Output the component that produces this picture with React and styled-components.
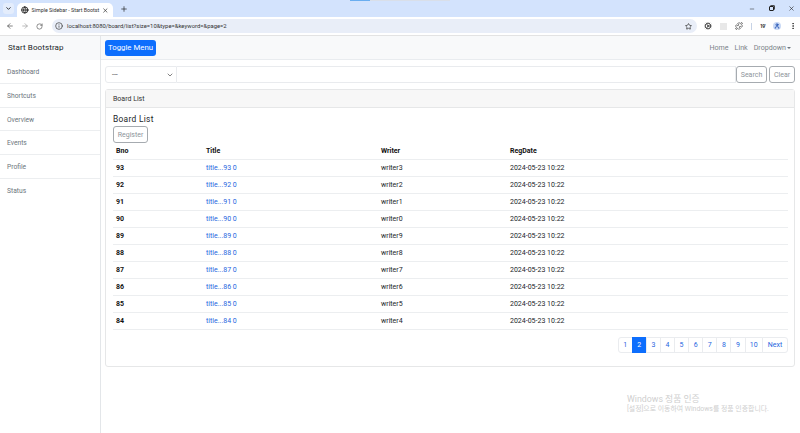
import React from "react";
import styled, { createGlobalStyle } from "styled-components";
import { ArrowLeft, ArrowRight, RotateCw, ChevronDown, Star, Plus, X, Minus, EllipsisVertical, Puzzle, Globe, User, Info, Cog } from "lucide-react";

const Global = createGlobalStyle`
  html, body { margin: 0; padding: 0; background: #fff; }
  body { font-family: Roboto, "Noto Sans CJK KR", sans-serif; font-size: 7px; color: #212529; }
  * { box-sizing: border-box; }
`;

const Page = styled.div`
  position: relative;
  width: 800px;
  height: 433px;
  overflow: hidden;
  display: flex;
  flex-direction: column;
`;

const CaptureMark = styled.div`
  position: absolute;
  left: ${(p) => p.$left}px;
  top: 0;
  width: ${(p) => p.$width}px;
  height: 1px;
  background: ${(p) => p.$color};
`;

const TabStrip = styled.div`
  height: 17px;
  background: #d3e3fd;
  display: flex;
  align-items: flex-end;
  padding-left: 3px;
  flex: none;
`;
const TabSearch = styled.div`
  width: 11px;
  height: 11px;
  margin-bottom: 3px;
  border-radius: 3px;
  background: #e4edfc;
  display: flex;
  align-items: center;
  justify-content: center;
  color: #1f1f1f;
`;
const Tab = styled.div`
  width: 96px;
  height: 14px;
  margin-left: 3px;
  background: #fff;
  border-radius: 5px 5px 0 0;
  display: flex;
  align-items: center;
  padding: 0 4px;
  gap: 3px;
  color: #333;
  font-size: 5.3px;
  white-space: nowrap;
`;
const TabTitle = styled.span`
  flex: 1;
`;
const NewTab = styled.div`
  margin: 0 0 3px 7px;
  height: 11px;
  display: flex;
  align-items: center;
  color: #1f1f1f;
`;
const WindowButtons = styled.div`
  margin-left: auto;
  height: 17px;
  display: flex;
  align-items: center;
  gap: 13px;
  padding-right: 5px;
  color: #1f1f1f;
`;
const Restore = styled.div`
  width: 5px;
  height: 5px;
  border: 1px solid #1f1f1f;
  border-radius: 1px;
  box-shadow: 1px -1px 0 -0.2px #1f1f1f;
  margin: 0 1px;
`;

const ToolBar = styled.div`
  height: 19px;
  flex: none;
  display: flex;
  align-items: center;
  padding-left: 6px;
  gap: 7px;
  color: #444;
  border-bottom: 1px solid #e3e3e3;
`;
const Address = styled.div`
  flex: 1;
  height: 14px;
  margin-left: 2px;
  background: #e9eef8;
  border-radius: 7px;
  display: flex;
  align-items: center;
  padding: 0 5px 0 3px;
  gap: 4px;
  color: #333;
  font-size: 5.9px;
`;
const Url = styled.span`
  flex: 1;
`;
const ToolIcons = styled.div`
  display: flex;
  align-items: center;
  gap: 8px;
  padding-right: 3px;
  color: #333;
`;
const Blank = styled.div`
  width: 7px;
  height: 7px;
  background: #e8e8e8;
`;
const Divider = styled.div`
  width: 1px;
  height: 7px;
  background: #c7d3e6;
`;
const Avatar = styled.div`
  width: 8px;
  height: 8px;
  border-radius: 50%;
  background: #c9d9f5;
  color: #0b3fa8;
  display: flex;
  align-items: center;
  justify-content: center;
`;
const Badge = styled.span`
  font-size: 5px;
  font-weight: 700;
  letter-spacing: -0.5px;
  color: #333;
`;

const Content = styled.div`
  flex: 1;
  display: flex;
  min-height: 0;
`;
const Sidebar = styled.aside`
  width: 101px;
  flex: none;
  border-right: 1px solid #e3e6e9;
`;
const SideHead = styled.div`
  height: 24px;
  background: #f8f9fa;
  font-size: 8px;
  line-height: 24px;
  padding-left: 8px;
  letter-spacing: 0.1px;
  color: #212529;
`;
const SideItem = styled.div`
  height: 23.8px;
  line-height: 24.5px;
  padding-left: 7px;
  font-size: 6.7px;
  color: #6c757d;
  border-bottom: 1px solid #eceef0;
  &:last-child { border-bottom: none; }
`;

const Main = styled.main`
  flex: 1;
  min-width: 0;
`;
const Navbar = styled.nav`
  height: 24px;
  background: #f8f9fa;
  border-bottom: 1px solid #e9ecef;
  display: flex;
  align-items: center;
  padding: 0 9px 0 4px;
`;
const Primary = styled.div`
  background: #0d6efd;
  color: #fff;
  border-radius: 3px;
  height: 16px;
  width: 51px;
  font-size: 7.8px;
  display: flex;
  align-items: center;
  justify-content: center;
`;
const NavLinks = styled.div`
  margin-left: auto;
  display: flex;
  gap: 6px;
  font-size: 7.1px;
  color: #7d848a;
  align-items: center;
`;
const Caret = styled.span`
  display: inline-block;
  margin-left: 1px;
  vertical-align: 1px;
  border-top: 2px solid #6c757d;
  border-left: 2px solid transparent;
  border-right: 2px solid transparent;
`;

const Body = styled.div`
  padding: 6px 5px 0 4px;
`;
const SearchRow = styled.div`
  display: flex;
  height: 17px;
`;
const Select = styled.div`
  width: 72px;
  border: 1px solid #e9ebee;
  border-radius: 3px 0 0 3px;
  display: flex;
  align-items: center;
  justify-content: space-between;
  padding: 0 2px 0 6px;
  font-size: 7px;
  color: #444;
`;
const Input = styled.div`
  flex: 1;
  border: 1px solid #e9ebee;
  border-left: none;
`;
const Outline = styled.div`
  border: 1px solid #a6abb0;
  border-radius: 3px;
  color: #8d949a;
  font-size: 7px;
  display: flex;
  align-items: center;
  justify-content: center;
  width: ${(p) => p.$w}px;
  height: ${(p) => p.$h || 17}px;
  margin-left: ${(p) => p.$ml || 0}px;
`;

const Card = styled.section`
  margin-top: 6px;
  height: 278px;
  border: 1px solid #e6e7e8;
  border-radius: 3px;
`;
const CardHead = styled.div`
  height: 18px;
  background: #f7f7f7;
  border-bottom: 1px solid #e6e7e8;
  font-size: 7px;
  line-height: 18px;
  padding-left: 7px;
  color: #333;
`;
const CardBody = styled.div`
  padding: 5px 6px 0 7px;
`;
const CardTitle = styled.div`
  font-size: 8.4px;
  line-height: 13px;
  letter-spacing: 0.3px;
  color: #212529;
`;
const Row = styled.div`
  display: grid;
  grid-template-columns: 90px 175px 129px 1fr;
  height: 17px;
  align-items: center;
  padding-left: 3px;
  font-size: 7px;
  border-bottom: 1px solid #eceef0;
  color: #212529;
`;
const Bold = styled.b`
  font-weight: 700;
  color: #111;
`;
const TitleLink = styled.span`
  color: #1f66e0;
`;

const Pager = styled.div`
  display: flex;
  justify-content: flex-end;
  margin-top: 7px;
`;
const PageBtn = styled.div`
  height: 16px;
  min-width: ${(p) => (p.$next ? 26 : p.$wide ? 18.5 : 15.1)}px;
  margin-left: -1px;
  border: 1px solid ${(p) => (p.$active ? "#0d6efd" : "#eaecef")};
  background: ${(p) => (p.$active ? "#0d6efd" : "#fff")};
  color: ${(p) => (p.$active ? "#fff" : "#1f66e0")};
  display: flex;
  align-items: center;
  justify-content: center;
  font-size: 7px;
  &:first-child { border-radius: 3px 0 0 3px; }
  &:last-child { border-radius: 0 3px 3px 0; }
`;

const Watermark = styled.div`
  position: absolute;
  left: 627px;
  top: 393px;
  color: #cfcfcf;
`;
const WmTitle = styled.div`
  font-size: 8.8px;
  line-height: 12px;
`;
const WmText = styled.div`
  font-size: 6.9px;
  line-height: 9px;
  white-space: nowrap;
`;

const rows = [
  [93, 3], [92, 2], [91, 1], [90, 0], [89, 9],
  [88, 8], [87, 7], [86, 6], [85, 5], [84, 4],
];
const pages = ["1", "2", "3", "4", "5", "6", "7", "8", "9", "10", "Next"];
const side = ["Dashboard", "Shortcuts", "Overview", "Events", "Profile", "Status"];

export default function App() {
  return (
    <Page>
      <Global />
      <CaptureMark $left={350} $width={20} $color="#6aaef0" />
      <CaptureMark $left={370} $width={80} $color="#d9dfe9" />
      <TabStrip>
        <TabSearch><ChevronDown size={7} strokeWidth={3} /></TabSearch>
        <Tab>
          <Globe size={8} strokeWidth={2.5} color="#111" />
          <TabTitle>Simple Sidebar - Start Bootst</TabTitle>
          <X size={7} strokeWidth={2.5} />
        </Tab>
        <NewTab><Plus size={8} strokeWidth={2} /></NewTab>
        <WindowButtons>
          <Minus size={6} strokeWidth={2} />
          <Restore />
          <X size={7} strokeWidth={2} />
        </WindowButtons>
      </TabStrip>
      <ToolBar>
        <ArrowLeft size={8} strokeWidth={2} />
        <ArrowRight size={8} strokeWidth={2} color="#999" />
        <RotateCw size={7} strokeWidth={2} />
        <Address>
          <Info size={8} strokeWidth={2} />
          <Url>localhost:8080/board/list?size=10&amp;type=&amp;keyword=&amp;page=2</Url>
          <Star size={7} strokeWidth={2.5} />
        </Address>
        <ToolIcons>
          <Cog size={8} strokeWidth={2} />
          <Blank />
          <Puzzle size={8} strokeWidth={2} />
          <Divider />
          <Badge>19'</Badge>
          <Avatar><User size={6} strokeWidth={3} /></Avatar>
          <EllipsisVertical size={8} strokeWidth={2.5} />
        </ToolIcons>
      </ToolBar>
      <Content>
        <Sidebar>
          <SideHead>Start Bootstrap</SideHead>
          {side.map((s) => <SideItem key={s}>{s}</SideItem>)}
        </Sidebar>
        <Main>
          <Navbar>
            <Primary>Toggle Menu</Primary>
            <NavLinks>
              <span>Home</span>
              <span>Link</span>
              <span>Dropdown<Caret /></span>
            </NavLinks>
          </Navbar>
          <Body>
            <SearchRow>
              <Select>---<ChevronDown size={8} strokeWidth={2} /></Select>
              <Input />
              <Outline $w={31}>Search</Outline>
              <Outline $w={26} $ml={2}>Clear</Outline>
            </SearchRow>
            <Card>
              <CardHead>Board List</CardHead>
              <CardBody>
                <CardTitle>Board List</CardTitle>
                <Outline $w={35} $h={17}>Register</Outline>
                <Row>
                  <Bold>Bno</Bold><Bold>Title</Bold><Bold>Writer</Bold><Bold>RegDate</Bold>
                </Row>
                {rows.map(([n, w]) => (
                  <Row key={n}>
                    <Bold>{n}</Bold>
                    <TitleLink>title...{n} 0</TitleLink>
                    <span>writer{w}</span>
                    <span>2024-05-23 10:22</span>
                  </Row>
                ))}
                <Pager>
                  {pages.map((p) => (
                    <PageBtn key={p} $active={p === "2"} $wide={p === "10"} $next={p === "Next"}>{p}</PageBtn>
                  ))}
                </Pager>
              </CardBody>
            </Card>
          </Body>
        </Main>
      </Content>
      <Watermark>
        <WmTitle>Windows 정품 인증</WmTitle>
        <WmText>[설정]으로 이동하여 Windows를 정품 인증합니다.</WmText>
      </Watermark>
    </Page>
  );
}
